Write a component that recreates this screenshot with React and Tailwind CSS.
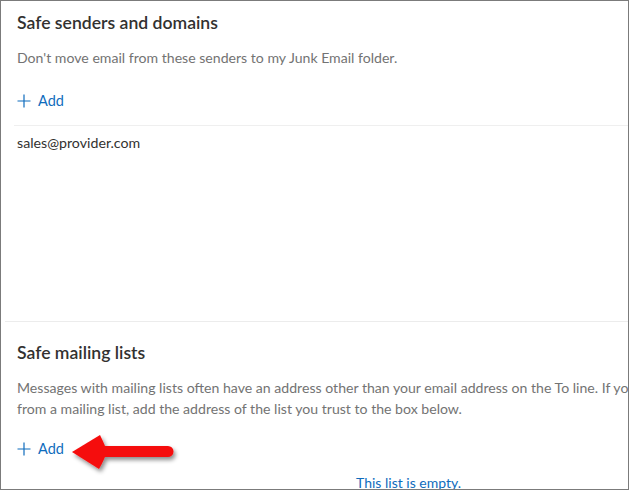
import React from 'react';

const PlusIcon = () => (
  <svg width="14" height="14" viewBox="0 0 14 14" className="shrink-0">
    <path d="M7 0.5V13.5M0.5 7H13.5" stroke="currentColor" strokeWidth="1.2" fill="none" />
  </svg>
);

const AddButton = ({ className = '' }) => (
  <button className={`flex items-center gap-[7px] h-6 text-[14.5px] text-[#0f6cbd] ${className}`}>
    <PlusIcon />
    <span>Add</span>
  </button>
);

// red callout arrow laid over the page
const RedArrow = () => (
  <svg width="120" height="52" viewBox="0 0 120 52" className="absolute left-[66px] top-[428px] pointer-events-none">
    <defs>
      <filter id="arrowShadow" x="-20%" y="-40%" width="150%" height="200%">
        <feDropShadow dx="2" dy="3" stdDeviation="2" floodColor="#000" floodOpacity="0.45" />
      </filter>
    </defs>
    <path
      d="M5 23 L33 6 Q36 12 38 17 L101 17 A5.5 5.5 0 0 1 101 28 L38 28 Q36 33 32 40 Z"
      fill="#f50f0f"
      filter="url(#arrowShadow)"
    />
  </svg>
);

export default function App() {
  return (
    <div
      className="relative w-[629px] h-[490px] overflow-hidden bg-white border border-[#7b7b7b] text-[#242424]"
      style={{ fontFamily: 'Lato, "Open Sans", sans-serif' }}
    >
      <section className="pl-4 pt-[10px]">
        <h2 className="text-[17.6px] leading-6 font-semibold text-[#323130]">Safe senders and domains</h2>
        <p className="mt-[13px] text-[14.1px] leading-5 text-[#737373]">
          Don't move email from these senders to my Junk Email folder.
        </p>
        <AddButton className="mt-[21px]" />
      </section>

      <div className="ml-[13px] mt-[12px] h-px bg-[#efefef]" />

      <div className="pl-4 pt-[7px] h-[195px]">
        <div className="text-[14.2px] leading-5 text-[#323130]">sales@provider.com</div>
      </div>

      <div className="ml-1 h-px bg-[#ececec]" />

      <section className="pl-4 pt-[19px]">
        <h2 className="text-[17.6px] leading-6 font-semibold text-[#323130]">Safe mailing lists</h2>
        <p className="mt-3 text-[14.1px] leading-[21px] text-[#737373] whitespace-nowrap">
          Messages with mailing lists often have an address other than your email address on the To line. If you receive messages
          <br />
          from a mailing list, add the address of the list you trust to the box below.
        </p>
        <AddButton className="mt-[18px]" />
        <div className="mt-3 pl-[339px] text-[14px] leading-5 text-[#0f6cbd]">This list is empty.</div>
      </section>

      <RedArrow />
    </div>
  );
}
